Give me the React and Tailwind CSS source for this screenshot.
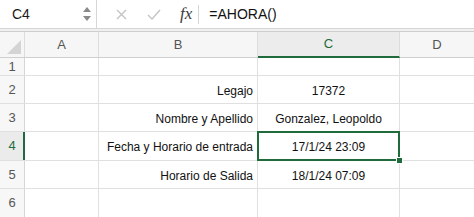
const font = { fontFamily: '"Liberation Sans", Arial, sans-serif' };

const rows = [
  { n: 1, h: "h-[18px]", b: "", c: "" },
  { n: 2, h: "h-[28px]", b: "Legajo", c: "17372" },
  { n: 3, h: "h-[28px]", b: "Nombre y Apellido", c: "Gonzalez, Leopoldo" },
  { n: 4, h: "h-[29px]", b: "Fecha y Horario de entrada", c: "17/1/24 23:09", active: true },
  { n: 5, h: "h-[28px]", b: "Horario de Salida", c: "18/1/24 07:09" },
  { n: 6, h: "h-[29px]", b: "", c: "" },
];

function Toolbar() {
  return (
    <div className="flex h-[29px] items-stretch border-b border-[#d6d6d6] bg-white">
      <div className="flex w-[96px] items-center justify-between pl-3 pr-[5px]">
        <span className="text-[14px] text-[#1a1a1a]">C4</span>
        <div className="flex flex-col items-center gap-[4px]">
          <svg width="8" height="5" viewBox="0 0 8 5">
            <path d="M4 0 L8 5 L0 5 Z" fill="#8a8a8a" />
          </svg>
          <svg width="8" height="5" viewBox="0 0 8 5">
            <path d="M0 0 L8 0 L4 5 Z" fill="#8a8a8a" />
          </svg>
        </div>
      </div>
      <div className="w-px bg-[#d6d6d6]" />
      <div className="flex flex-1 items-center">
        <div className="ml-[18px] flex w-[12px] justify-center">
          <svg width="11" height="11" viewBox="0 0 11 11">
            <path d="M1 1 L10 10 M10 1 L1 10" stroke="#c4c4c4" strokeWidth="1.4" fill="none" />
          </svg>
        </div>
        <div className="ml-[20px] flex w-[14px] justify-center">
          <svg width="14" height="11" viewBox="0 0 14 11">
            <path d="M1 6 L5 10 L13 1" stroke="#c4c4c4" strokeWidth="1.4" fill="none" />
          </svg>
        </div>
        <span
          className="ml-[19px] text-[17px] italic text-[#3a3a3a]"
          style={{ fontFamily: '"Liberation Serif", "Times New Roman", serif' }}
        >
          fx
        </span>
        <div className="ml-[6px] h-[19px] w-px bg-[#d6d6d6]" />
        <span className="ml-[10px] text-[14px] text-[#111]">=AHORA()</span>
      </div>
    </div>
  );
}

function HeaderRow() {
  const cols = [
    { l: "A", w: "w-[74px]" },
    { l: "B", w: "w-[159px]" },
    { l: "C", w: "w-[142px]", active: true },
  ];
  return (
    <div className="flex h-[27px] border-y border-[#cfcfcf] bg-[#f6f6f6] text-[13px] text-[#555]">
      <div className="relative w-[25px] shrink-0 border-r border-[#dcdcdc]">
        <svg className="absolute bottom-[3px] right-[3px]" width="14" height="14" viewBox="0 0 14 14">
          <path d="M14 0 L14 14 L0 14 Z" fill="#d4d4d4" />
        </svg>
      </div>
      {cols.map((c) =>
        c.active ? (
          <div
            key={c.l}
            className={`${c.w} shrink-0 flex items-center justify-center border-r border-[#dcdcdc] border-b-2 border-b-[#1f6b3c] bg-[#ececec] text-[#1f6b3c] -mb-px`}
          >
            {c.l}
          </div>
        ) : (
          <div key={c.l} className={`${c.w} shrink-0 flex items-center justify-center border-r border-[#dcdcdc]`}>
            {c.l}
          </div>
        )
      )}
      <div className="flex flex-1 items-center justify-center">D</div>
    </div>
  );
}

function Row({ r }) {
  return (
    <div className={`flex ${r.h} border-b border-[#e0e0e0] text-[12px]`}>
      <div
        className={`relative flex w-[25px] shrink-0 items-center justify-center border-r border-[#d6d6d6] text-[13px] ${
          r.active ? "bg-[#ebebeb] text-[#1f6b3c]" : "bg-[#f7f7f7] text-[#555]"
        }`}
      >
        {r.n}
        {r.active && <div className="absolute -right-px top-0 bottom-0 w-[2px] bg-[#1f6b3c]" />}
      </div>
      <div className="w-[74px] shrink-0 border-r border-[#e0e0e0]" />
      <div className="flex w-[159px] shrink-0 items-center justify-end border-r border-[#e0e0e0] pr-[4px] pt-[2px] text-[#111]">
        {r.b}
      </div>
      <div
        className={`relative flex w-[142px] shrink-0 items-center justify-center border-r border-[#e0e0e0] pt-[2px] text-[#111] ${
          r.active ? "z-10" : ""
        }`}
      >
        {r.c}
        {r.active && (
          <>
            <div className="absolute -left-px -top-px -right-px -bottom-px border-2 border-[#1f6b3c]" />
            <div className="absolute -bottom-[4px] -right-[4px] z-10 h-[7px] w-[7px] border border-white bg-[#1f6b3c]" />
          </>
        )}
      </div>
      <div className="flex-1" />
    </div>
  );
}

export default function App() {
  return (
    <div className="h-[217px] w-[474px] overflow-hidden bg-white" style={font}>
      <Toolbar />
      <div className="h-[2px] bg-[#f0f0f0]" />
      <HeaderRow />
      {rows.map((r) => (
        <Row key={r.n} r={r} />
      ))}
    </div>
  );
}
